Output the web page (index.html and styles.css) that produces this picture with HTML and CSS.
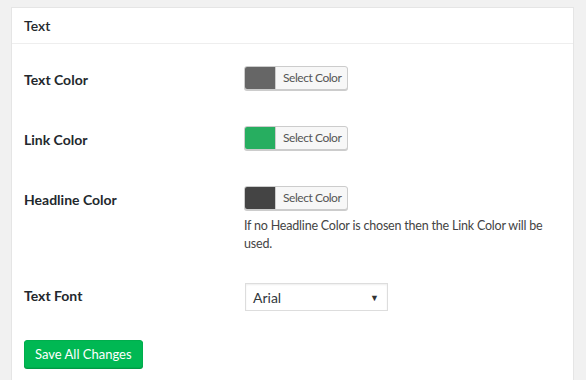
FILE: index.html
```html
<!DOCTYPE html>
<html lang="en">
<head>
  <meta charset="UTF-8" />
  <title>Text Settings</title>
  <link rel="stylesheet" href="styles.css">
</head>
<body>
  <div class="panel">
    <h2 class="panel-title">Text</h2>
    <div class="panel-body">
      <div class="row">
        <div class="label">Text Color</div>
        <div class="field">
          <button class="color-result"><span class="swatch" style="background:#666666"></span><span class="color-text">Select Color</span></button>
        </div>
      </div>
      <div class="row">
        <div class="label">Link Color</div>
        <div class="field">
          <button class="color-result"><span class="swatch" style="background:#27ae60"></span><span class="color-text">Select Color</span></button>
        </div>
      </div>
      <div class="row">
        <div class="label">Headline Color</div>
        <div class="field">
          <button class="color-result"><span class="swatch" style="background:#444444"></span><span class="color-text">Select Color</span></button>
          <p class="description">If no Headline Color is chosen then the Link Color will be used.</p>
        </div>
      </div>
      <div class="row row-font">
        <div class="label">Text Font</div>
        <div class="field">
          <div class="select">
            <span>Arial</span>
            <span class="arrow">&#9660;</span>
          </div>
        </div>
      </div>
      <button class="save">Save All Changes</button>
    </div>
  </div>
</body>
</html>
```

FILE: styles.css
```css
body {
  margin: 0;
  padding: 7px 12px 0 11px;
  background: #f1f1f1;
  font-family: Lato, 'Open Sans', sans-serif;
  color: #23282d;
  height: 100vh;
  box-sizing: border-box;
  overflow: hidden;
}

.panel {
  background: #fff;
  border: 1px solid #e5e5e5;
  border-bottom: none;
  height: 100%;
  box-sizing: border-box;
}

.panel-title {
  margin: 0;
  font-size: 14px;
  font-weight: 600;
  line-height: 35px;
  padding: 0 12px;
  border-bottom: 1px solid #eee;
}

.panel-body {
  padding: 22px 12px 0 12px;
}

.row {
  display: grid;
  grid-template-columns: 220px 1fr;
  align-items: start;
  padding-right: 10px;
  margin-bottom: 36px;
}

.row-font {
  margin-top: -6px;
  margin-bottom: 29px;
}

.label {
  font-size: 14px;
  font-weight: 700;
  line-height: 20px;
  padding-top: 4px;
}

.row-font .label {
  padding-top: 3px;
}

.color-result {
  display: flex;
  height: 24px;
  padding: 0;
  border: 1px solid #ccc;
  border-radius: 3px;
  background: #f7f7f7;
  box-shadow: 0 1px 0 #ccc;
  overflow: hidden;
  font-family: inherit;
  cursor: pointer;
}

.swatch {
  width: 30px;
  height: 100%;
  border-right: 1px solid #ccc;
}

.color-text {
  font-size: 12px;
  letter-spacing: -0.45px;
  color: #555;
  line-height: 22px;
  padding: 0 6px 0 7px;
}

.description {
  margin: 7px 0 0;
  font-size: 12.5px;
  letter-spacing: -0.2px;
  line-height: 18px;
  color: #444;
  max-width: 307px;
}

.select {
  display: flex;
  justify-content: space-between;
  align-items: center;
  width: 143px;
  height: 28px;
  margin-left: 1px;
  box-sizing: border-box;
  border: 1px solid #ddd;
  box-shadow: inset 0 1px 2px rgba(0, 0, 0, 0.07);
  padding: 0 8px 0 7px;
  font-size: 14px;
  color: #32373c;
}

.arrow {
  font-size: 9px;
  color: #333;
}

.save {
  height: 28px;
  padding: 0 10px;
  border: 1px solid #00ae4d;
  border-radius: 3px;
  background: #00b853;
  color: #fff;
  font-family: inherit;
  font-size: 13px;
  box-shadow: 0 1px 0 #009a43;
  cursor: pointer;
}
```
